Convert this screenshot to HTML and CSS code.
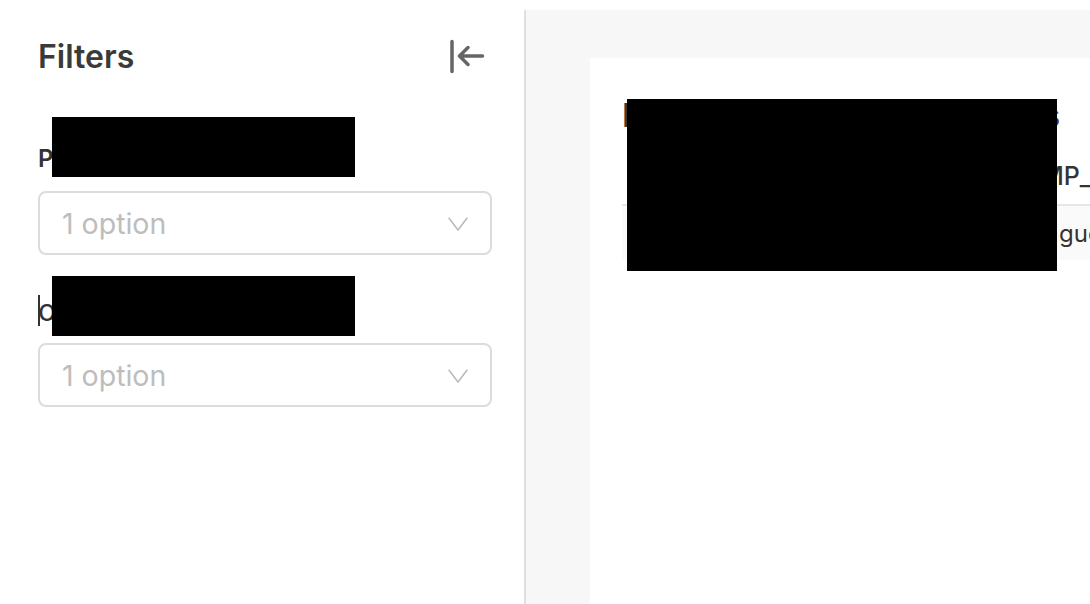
FILE: index.html
```html
<!DOCTYPE html>
<html lang="en">
<head>
<meta charset="utf-8">
<title>Filters</title>
<link rel="stylesheet" href="styles.css">
</head>
<body>
<div class="page">
  <aside class="sidebar">
    <div class="sidebar-head">
      <h2 class="sidebar-title">Filters</h2>
      <svg class="collapse-icon" viewBox="0 0 36 36" width="36" height="36" aria-hidden="true">
        <path d="M2 3.5V33.5M32.5 18H10M18 9.5L9.5 18L18 26.5" fill="none" stroke="#666" stroke-width="3.5" stroke-linecap="round" stroke-linejoin="round"/>
      </svg>
    </div>
    <div class="filter filter-first">
      <div class="filter-label filter-label-bold">P</div>
      <div class="select">
        <span class="select-text">1 option</span>
        <svg class="chevron" viewBox="0 0 20 14" width="20" height="14" aria-hidden="true"><path d="M0.7 0.7L10 13L19.3 0.7" fill="none" stroke="#bbb" stroke-width="1.6"/></svg>
      </div>
    </div>
    <div class="filter filter-second">
      <div class="filter-label filter-label-caret"><span class="caret"></span>o</div>
      <div class="select">
        <span class="select-text">1 option</span>
        <svg class="chevron" viewBox="0 0 20 14" width="20" height="14" aria-hidden="true"><path d="M0.7 0.7L10 13L19.3 0.7" fill="none" stroke="#bbb" stroke-width="1.6"/></svg>
      </div>
    </div>
    <div class="redact redact-a"></div>
    <div class="redact redact-b"></div>
  </aside>
  <main class="main">
    <section class="card">
      <h3 class="card-title"><span>P</span><span>s</span></h3>
      <div class="table-head"><span>MP_</span></div>
      <div class="table-row"><span>gue</span></div>
    </section>
    <div class="redact redact-c"></div>
  </main>
</div>
</body>
</html>
```
FILE: styles.css
```css
* { box-sizing: border-box; }
html, body { margin: 0; height: 100%; overflow: hidden; background: #fff; }
body { font-family: Inter, "Liberation Sans", sans-serif; color: #333; }
.page { display: flex; height: 604px; position: relative; }
.sidebar { width: 526px; flex: none; padding: 28px 32px 0 38px; border-right: 2px solid #e0e0e0; margin-top: 10px; }
.sidebar-head { display: flex; justify-content: space-between; align-items: center; height: 36px; }
.sidebar-title { margin: 0; padding-top: 2px; font-size: 32px; font-weight: 600; line-height: 36px; color: #3a3a3a; }
.collapse-icon { display: block; margin-right: 6px; }
.filter-first { margin-top: 64px; }
.filter-second { margin-top: 35px; }
.filter-label { padding-top: 1px; font-size: 24px; line-height: 40px; height: 40px; color: #333; }
.filter-label-bold { font-weight: 600; }
.filter-label-caret { position: relative; padding-top: 0; font-size: 30px; font-weight: 400; }
.caret { position: absolute; left: 0; top: 5px; width: 2px; height: 31px; background: #333; }
.select { display: flex; align-items: center; justify-content: space-between; height: 64px; margin-top: 13px; padding: 0 22px; border: 2px solid #dcdcdc; border-radius: 8px; font-size: 28.5px; color: #bdbdbd; }
.select-text { padding-top: 1px; }
.chevron { display: block; margin-top: 2px; }
.main { flex: 1; min-width: 0; margin-top: 10px; padding: 48px 0 0 64px; background: #f7f7f7; overflow: hidden; }
.card { background: #fff; height: 546px; width: 700px; padding: 40px 0 0 32px; }
.card-title { display: flex; justify-content: space-between; width: 438px; margin: 0; font-size: 32px; font-weight: 600; line-height: 36px; color: #3a3a3a; }
.table-head { height: 72px; padding: 26px 0 0 419px; font-size: 25px; font-weight: 500; line-height: 32px; border-bottom: 2px solid #e6e6e6; color: #333; }
.table-row { height: 54px; padding: 10px 0 0 437px; background: #fafafa; font-size: 24px; line-height: 36px; color: #333; }
.redact { position: absolute; background: #000; }
.redact-a { left: 52px; top: 117px; width: 303px; height: 60px; }
.redact-b { left: 52px; top: 276px; width: 303px; height: 60px; }
.redact-c { left: 627px; top: 99px; width: 430px; height: 172px; }
```
